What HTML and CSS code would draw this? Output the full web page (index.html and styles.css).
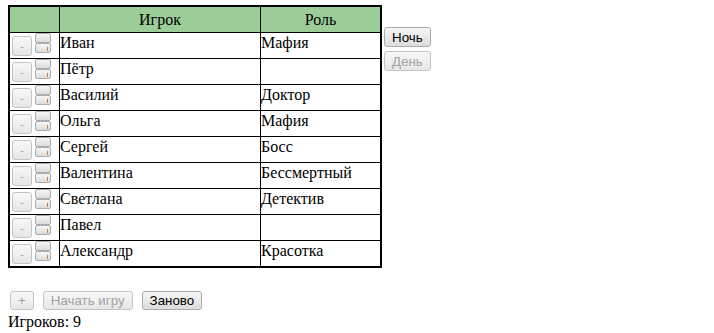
FILE: index.html
```html
<!DOCTYPE html>
<html>
	<head>
		<title>Мафия</title><meta charset="utf-8">
		<link rel="stylesheet" href="styles.css">
	</head>
	<body>
		<div id="juego">
			<table id="jugadores">
				<tr>
					<th class="colTools"></th><th class="colName">Игрок</th><th class="colRole">Роль</th>
				</tr>
				<tr><td><div class="tools"><button class="del" disabled>-</button><div class="move"><button class="mv"></button><button class="mv"><i></i></button></div></div></td><td>Иван</td><td>Мафия</td></tr>
				<tr><td><div class="tools"><button class="del" disabled>-</button><div class="move"><button class="mv"></button><button class="mv"><i></i></button></div></div></td><td>Пётр</td><td></td></tr>
				<tr><td><div class="tools"><button class="del" disabled>-</button><div class="move"><button class="mv"></button><button class="mv"><i></i></button></div></div></td><td>Василий</td><td>Доктор</td></tr>
				<tr><td><div class="tools"><button class="del" disabled>-</button><div class="move"><button class="mv"></button><button class="mv"><i></i></button></div></div></td><td>Ольга</td><td>Мафия</td></tr>
				<tr><td><div class="tools"><button class="del" disabled>-</button><div class="move"><button class="mv"></button><button class="mv"><i></i></button></div></div></td><td>Сергей</td><td>Босс</td></tr>
				<tr><td><div class="tools"><button class="del" disabled>-</button><div class="move"><button class="mv"></button><button class="mv"><i></i></button></div></div></td><td>Валентина</td><td>Бессмертный</td></tr>
				<tr><td><div class="tools"><button class="del" disabled>-</button><div class="move"><button class="mv"></button><button class="mv"><i></i></button></div></div></td><td>Светлана</td><td>Детектив</td></tr>
				<tr><td><div class="tools"><button class="del" disabled>-</button><div class="move"><button class="mv"></button><button class="mv"><i></i></button></div></div></td><td>Павел</td><td></td></tr>
				<tr><td><div class="tools"><button class="del" disabled>-</button><div class="move"><button class="mv"></button><button class="mv"><i></i></button></div></div></td><td>Александр</td><td>Красотка</td></tr>
			</table>
			<div id="fases">
				<button class="boton">Ночь</button>
				<button class="boton" disabled>День</button>
			</div>
		</div>
		<div id="controles">
			<button class="boton" disabled>+</button>
			<button class="boton" disabled>Начать игру</button>
			<button class="boton">Заново</button>
		</div>
		<div id="contador">Игроков: 9</div>
	</body>
</html>
```

FILE: styles.css
```css
body {font-family: "Liberation Serif", "Times New Roman", serif; font-size: 16px; margin: 5px 8px; color: #000;}
#juego {display: flex; align-items: flex-start;}
#jugadores {width: 374px; border-collapse: collapse; border: 2px solid #000;}
th {background-color: #9ccd99; font-weight: normal; height: 25px; padding: 0; border: 1px solid #000; text-align: center;}
td {height: 25px; padding: 0; border: 1px solid #000; vertical-align: top; text-align: left; line-height: 19px;}
.colTools {width: 49px;}
.colName {width: 200px;}
.tools {display: flex; align-items: flex-start; padding-left: 2px;}
.move {display: flex; flex-direction: column; margin-left: 3px;}
button {font-family: "Liberation Sans", Arial, sans-serif; font-size: 13.33px; color: #000; background: linear-gradient(#f6f6f6, #dcdcdc); border: 1px solid #acacac; border-radius: 3px; padding: 1px 6px; margin: 0; line-height: 15px;}
button:disabled {color: #a3a3a3; border-color: #c4c4c4; background: linear-gradient(#f8f8f8, #e6e6e6);}
.del {width: 20px; height: 20px; padding: 0; margin-top: 3px; font-size: 11px;}
.mv {width: 16px; height: 10px; padding: 0; position: relative; border-radius: 2px;}
.mv i {position: absolute; right: 2px; bottom: 1px; width: 1px; height: 4px; background: #c08040;}
#fases {display: flex; flex-direction: column; align-items: flex-start; gap: 4px; padding-top: 22px; margin-left: 2px;}
.boton {height: 20px; padding: 1px 7px;}
#controles {display: flex; gap: 9px; margin-top: 23px; padding-left: 2px;}
#controles .boton {height: 19px;}
#contador {margin-top: 3px;}
```
